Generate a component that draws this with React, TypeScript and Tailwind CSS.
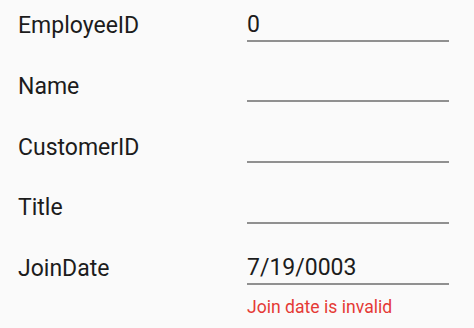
const fields = [
  { label: "EmployeeID", value: "0" },
  { label: "Name", value: "" },
  { label: "CustomerID", value: "" },
  { label: "Title", value: "" },
  { label: "JoinDate", value: "7/19/0003" },
];

const Field = ({ label, value, first }: { label: string; value: string; first: boolean }) => {
  return (
    <div className={`flex items-end h-[41.5px] ${first ? "" : "mt-[19.25px]"}`}>
      <div className="w-[229px] text-[23px] leading-[28px] pb-[1.4px] text-[#1c1c1c]">
        {label}
      </div>
      <div className="w-[202px] h-[31px] border-b-2 border-[#909090] text-[23px] leading-[28px] pb-[1px] text-[#1c1c1c]">
        {value}
      </div>
    </div>
  );
};

export default function App() {
  return (
    <div
      className="w-[474px] h-[328px] bg-[#fafafa] pl-[18px] overflow-hidden"
      style={{ fontFamily: "Roboto, 'Noto Sans', sans-serif" }}
    >
      {fields.map((f, idx) => (
        <Field key={f.label} label={f.label} value={f.value} first={idx === 0} />
      ))}
      <div className="ml-[229px] mt-[11.6px] text-[17.6px] leading-[22px] text-[#e53935]">
        Join date is invalid
      </div>
    </div>
  );
}
